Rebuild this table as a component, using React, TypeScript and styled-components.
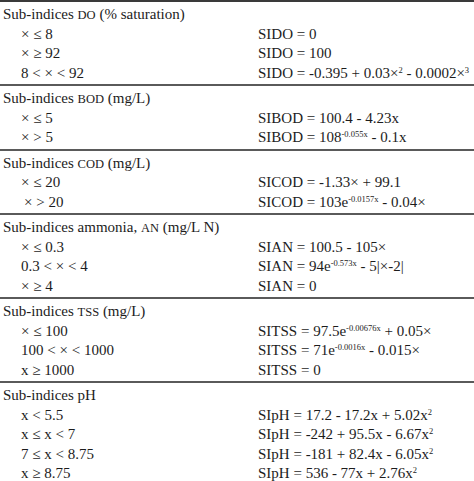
import React from 'react';
import styled, { createGlobalStyle } from 'styled-components';

const GlobalStyle = createGlobalStyle`
  html, body {
    margin: 0;
    padding: 0;
    background: #fff;
  }
  body {
    font-family: "Liberation Serif", "Times New Roman", serif;
    color: #1c1c1c;
  }
`;

const Table = styled.div`
  width: 474px;
  height: 481px;
  overflow: hidden;
  border-top: 2px solid #3a3a3a;
  font-size: 15px;
`;

const Section = styled.div<{ $last?: boolean }>`
  padding: 3px 0 1px;
  border-bottom: ${(p) => (p.$last ? 'none' : '2px solid #5a5a5a')};
`;

const Header = styled.div`
  height: 19.5px;
  line-height: 19.5px;
  padding-left: 3px;
  white-space: nowrap;
`;

const Small = styled.span`
  font-size: 12.5px;
`;

const Row = styled.div`
  display: grid;
  grid-template-columns: 258px 1fr;
  height: 19.5px;
  line-height: 19.5px;
  white-space: nowrap;
`;

const Cond = styled.div<{ $indent?: number }>`
  padding-left: ${(p) => p.$indent ?? 21}px;
`;

const Formula = styled.div`
  overflow: hidden;
`;

const Sup = styled.sup`
  font-size: 8.5px;
  line-height: 0;
  vertical-align: 5px;
`;

interface Line {
  cond: React.ReactNode;
  formula: React.ReactNode;
  indent?: number;
}

interface Block {
  title: React.ReactNode;
  lines: Line[];
}

const blocks: Block[] = [
  {
    title: (
      <>
        Sub-indices <Small>DO</Small> (% saturation)
      </>
    ),
    lines: [
      { cond: '× ≤ 8', formula: 'SIDO = 0' },
      { cond: '× ≥ 92', formula: 'SIDO = 100' },
      {
        cond: '8 < × < 92',
        formula: (
          <>
            SIDO = -0.395 + 0.03×<Sup>2</Sup> - 0.0002×<Sup>3</Sup>
          </>
        ),
      },
    ],
  },
  {
    title: (
      <>
        Sub-indices <Small>BOD</Small> (mg/L)
      </>
    ),
    lines: [
      { cond: '× ≤ 5', formula: 'SIBOD = 100.4 - 4.23x' },
      {
        cond: '× > 5',
        formula: (
          <>
            SIBOD = 108<Sup>-0.055x</Sup> - 0.1x
          </>
        ),
      },
    ],
  },
  {
    title: (
      <>
        Sub-indices <Small>COD</Small> (mg/L)
      </>
    ),
    lines: [
      { cond: '× ≤ 20', formula: 'SICOD = -1.33× + 99.1' },
      {
        cond: '× > 20',
        indent: 24,
        formula: (
          <>
            SICOD = 103e<Sup>-0.0157x</Sup> - 0.04×
          </>
        ),
      },
    ],
  },
  {
    title: (
      <>
        Sub-indices ammonia, <Small>AN</Small> (mg/L N)
      </>
    ),
    lines: [
      { cond: '× ≤ 0.3', formula: 'SIAN = 100.5 - 105×' },
      {
        cond: '0.3 < × < 4',
        formula: (
          <>
            SIAN = 94e<Sup>-0.573x</Sup> - 5|×-2|
          </>
        ),
      },
      { cond: '× ≥ 4', formula: 'SIAN = 0' },
    ],
  },
  {
    title: (
      <>
        Sub-indices <Small>TSS</Small> (mg/L)
      </>
    ),
    lines: [
      {
        cond: '× ≤ 100',
        formula: (
          <>
            SITSS = 97.5e<Sup>-0.00676x</Sup> + 0.05×
          </>
        ),
      },
      {
        cond: '100 < × < 1000',
        formula: (
          <>
            SITSS = 71e<Sup>-0.0016x</Sup> - 0.015×
          </>
        ),
      },
      { cond: 'x ≥ 1000', formula: 'SITSS = 0' },
    ],
  },
  {
    title: 'Sub-indices pH',
    lines: [
      {
        cond: 'x < 5.5',
        formula: (
          <>
            SIpH = 17.2 - 17.2x + 5.02x<Sup>2</Sup>
          </>
        ),
      },
      {
        cond: 'x ≤ x < 7',
        formula: (
          <>
            SIpH = -242 + 95.5x - 6.67x<Sup>2</Sup>
          </>
        ),
      },
      {
        cond: '7 ≤ x < 8.75',
        formula: (
          <>
            SIpH = -181 + 82.4x - 6.05x<Sup>2</Sup>
          </>
        ),
      },
      {
        cond: 'x ≥ 8.75',
        formula: (
          <>
            SIpH = 536 - 77x + 2.76x<Sup>2</Sup>
          </>
        ),
      },
    ],
  },
];

export default function App() {
  return (
    <>
      <GlobalStyle />
      <Table>
        {blocks.map((b, i) => (
          <Section key={i} $last={i === blocks.length - 1}>
            <Header>{b.title}</Header>
            {b.lines.map((l, j) => (
              <Row key={j}>
                <Cond $indent={l.indent}>{l.cond}</Cond>
                <Formula>{l.formula}</Formula>
              </Row>
            ))}
          </Section>
        ))}
      </Table>
    </>
  );
}
